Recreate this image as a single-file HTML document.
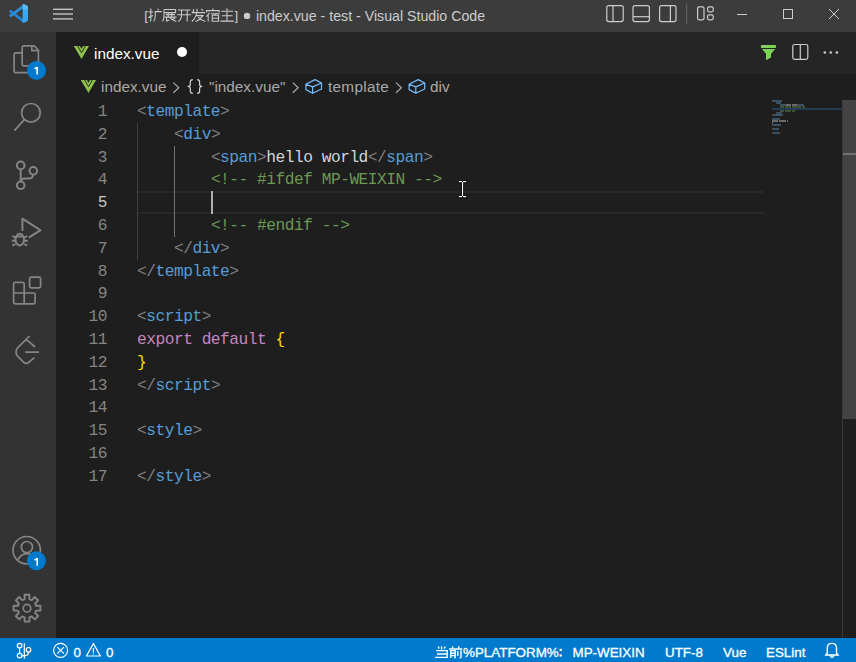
<!DOCTYPE html>
<html><head><meta charset="utf-8">
<style>
*{margin:0;padding:0;box-sizing:border-box}
html,body{width:856px;height:662px;overflow:hidden;background:#1e1e1e}
body{position:relative;font-family:"Liberation Sans",sans-serif}
.abs{position:absolute}
#title{left:0;top:0;width:856px;height:32px;background:#3c3c3c}
#act{left:0;top:32px;width:56px;height:606px;background:#333333}
#tabs{left:56px;top:32px;width:800px;height:42px;background:#252526}
#tab{left:56px;top:32px;width:143px;height:42px;background:#1e1e1e}
#status{left:0;top:638px;width:856px;height:24px;background:#007acc}
.t{position:absolute;white-space:pre;line-height:1}
.st{-webkit-text-stroke:0.3px #ffffff}
.code{position:absolute;left:137px;font-family:"Liberation Mono",monospace;font-size:16.2px;letter-spacing:-0.48px;white-space:pre;color:#d4d4d4;height:22.8px;line-height:22.8px}
.ln{position:absolute;left:60px;width:47px;text-align:right;font-family:"Liberation Mono",monospace;font-size:16.2px;letter-spacing:-0.48px;color:#858585;height:22.8px;line-height:22.8px}
.p{color:#808080}.g{color:#569cd6}.c{color:#6a9955}.k{color:#c586c0}.y{color:#ffd700}
svg{position:absolute;left:0;top:0;overflow:visible}
</style></head><body>
<div id="title" class="abs"></div>
<div id="act" class="abs"></div>
<div id="tabs" class="abs"></div>
<div id="tab" class="abs"></div>
<div id="status" class="abs"></div>

<!-- current line highlight -->
<div class="abs" style="left:138px;top:191px;width:626px;height:2px;background:#282828"></div>
<div class="abs" style="left:138px;top:212px;width:626px;height:2px;background:#282828"></div>
<!-- indent guides -->
<div class="abs" style="left:137px;top:123px;width:1px;height:137px;background:#404040"></div>
<div class="abs" style="left:174px;top:146px;width:1px;height:91px;background:#707070"></div>
<!-- cursor -->
<div class="abs" style="left:211px;top:191px;width:2px;height:23px;background:#aeafad"></div>

<!-- title text -->
<div class="t" style="left:144.2px;top:8.6px;font-size:13.4px;color:#cccccc">[</div>
<div class="t" style="left:234.6px;top:8.6px;font-size:13.4px;color:#cccccc">]</div>
<div class="t" style="left:255.9px;top:8.8px;font-size:14.2px;color:#cccccc">index.vue - test - Visual Studio Code</div>

<!-- tab text -->
<div class="t" style="left:94px;top:45.6px;font-size:15.3px;color:#ffffff">index.vue</div>
<div class="abs" style="left:176.5px;top:47.4px;width:10px;height:10px;border-radius:50%;background:#ffffff"></div>

<!-- breadcrumbs -->
<div class="t" style="left:101px;top:79.4px;font-size:15.3px;color:#a9a9a9">index.vue</div>
<div class="t" style="left:209px;top:79.4px;font-size:15.3px;color:#a9a9a9">"index.vue"</div>
<div class="t" style="left:328px;top:79.4px;font-size:15.3px;letter-spacing:0.3px;color:#a9a9a9">template</div>
<div class="t" style="left:430px;top:79.4px;font-size:15.3px;color:#a9a9a9">div</div>

<!-- code -->
<div class="ln" style="top:101px">1</div>
<div class="code" style="top:101px"><span class="p">&lt;</span><span class="g">template</span><span class="p">&gt;</span></div>
<div class="ln" style="top:124px">2</div>
<div class="code" style="top:124px">    <span class="p">&lt;</span><span class="g">div</span><span class="p">&gt;</span></div>
<div class="ln" style="top:147px">3</div>
<div class="code" style="top:147px">        <span class="p">&lt;</span><span class="g">span</span><span class="p">&gt;</span>hello world<span class="p">&lt;/</span><span class="g">span</span><span class="p">&gt;</span></div>
<div class="ln" style="top:169px">4</div>
<div class="code" style="top:169px">        <span class="c">&lt;!-- #ifdef MP-WEIXIN --&gt;</span></div>
<div class="ln" style="top:192px;color:#c6c6c6">5</div>
<div class="ln" style="top:215px">6</div>
<div class="code" style="top:215px">        <span class="c">&lt;!-- #endif --&gt;</span></div>
<div class="ln" style="top:238px">7</div>
<div class="code" style="top:238px">    <span class="p">&lt;/</span><span class="g">div</span><span class="p">&gt;</span></div>
<div class="ln" style="top:261px">8</div>
<div class="code" style="top:261px"><span class="p">&lt;/</span><span class="g">template</span><span class="p">&gt;</span></div>
<div class="ln" style="top:283px">9</div>
<div class="ln" style="top:306px">10</div>
<div class="code" style="top:306px"><span class="p">&lt;</span><span class="g">script</span><span class="p">&gt;</span></div>
<div class="ln" style="top:329px">11</div>
<div class="code" style="top:329px"><span class="k">export</span> <span class="k">default</span> <span class="y">{</span></div>
<div class="ln" style="top:352px">12</div>
<div class="code" style="top:352px"><span class="y">}</span></div>
<div class="ln" style="top:375px">13</div>
<div class="code" style="top:375px"><span class="p">&lt;/</span><span class="g">script</span><span class="p">&gt;</span></div>
<div class="ln" style="top:397px">14</div>
<div class="ln" style="top:420px">15</div>
<div class="code" style="top:420px"><span class="p">&lt;</span><span class="g">style</span><span class="p">&gt;</span></div>
<div class="ln" style="top:443px">16</div>
<div class="ln" style="top:466px">17</div>
<div class="code" style="top:466px"><span class="p">&lt;/</span><span class="g">style</span><span class="p">&gt;</span></div>

<!-- scrollbar -->
<div class="abs" style="left:842px;top:100px;width:1px;height:538px;background:#3a3a3a"></div>
<div class="abs" style="left:843px;top:100px;width:13px;height:319px;background:#434343"></div>
<div class="abs" style="left:843px;top:153px;width:13px;height:2px;background:#707070"></div>

<!-- status -->
<div class="t st" style="left:463px;top:645.6px;font-size:13.4px;color:#ffffff">%PLATFORM%</div>
<div class="t st" style="left:572.5px;top:645.6px;font-size:13.4px;color:#ffffff">MP-WEIXIN</div>
<div class="t st" style="left:665px;top:645.6px;font-size:13.4px;color:#ffffff">UTF-8</div>
<div class="t st" style="left:723px;top:645.6px;font-size:13.4px;color:#ffffff">Vue</div>
<div class="t st" style="left:766px;top:645.6px;font-size:13.4px;color:#ffffff">ESLint</div>
<div class="t st" style="left:73.5px;top:645.6px;font-size:13.4px;color:#ffffff">0</div>
<div class="t st" style="left:106px;top:645.6px;font-size:13.4px;color:#ffffff">0</div>

<svg width="856" height="662" viewBox="0 0 856 662">
 <!-- minimap -->
 <rect x="772" y="108" width="70" height="2" fill="#264f78" opacity="0.6"/>
 <g opacity="0.42"><rect x="772" y="100" width="1" height="2" fill="#808080"/><rect x="773" y="100" width="8" height="2" fill="#569cd6"/><rect x="781" y="100" width="1" height="2" fill="#808080"/><rect x="776" y="102" width="1" height="2" fill="#808080"/><rect x="777" y="102" width="3" height="2" fill="#569cd6"/><rect x="780" y="102" width="1" height="2" fill="#808080"/><rect x="780" y="104" width="1" height="2" fill="#808080"/><rect x="781" y="104" width="4" height="2" fill="#569cd6"/><rect x="785" y="104" width="1" height="2" fill="#808080"/><rect x="786" y="104" width="5" height="2" fill="#d4d4d4"/><rect x="792" y="104" width="5" height="2" fill="#d4d4d4"/><rect x="797" y="104" width="2" height="2" fill="#808080"/><rect x="799" y="104" width="4" height="2" fill="#569cd6"/><rect x="803" y="104" width="1" height="2" fill="#808080"/><rect x="780" y="106" width="4" height="2" fill="#6a9955"/><rect x="785" y="106" width="6" height="2" fill="#6a9955"/><rect x="792" y="106" width="9" height="2" fill="#6a9955"/><rect x="802" y="106" width="3" height="2" fill="#6a9955"/><rect x="780" y="110" width="4" height="2" fill="#6a9955"/><rect x="785" y="110" width="6" height="2" fill="#6a9955"/><rect x="792" y="110" width="3" height="2" fill="#6a9955"/><rect x="776" y="112" width="2" height="2" fill="#808080"/><rect x="778" y="112" width="3" height="2" fill="#569cd6"/><rect x="781" y="112" width="1" height="2" fill="#808080"/><rect x="772" y="114" width="2" height="2" fill="#808080"/><rect x="774" y="114" width="8" height="2" fill="#569cd6"/><rect x="782" y="114" width="1" height="2" fill="#808080"/><rect x="772" y="118" width="1" height="2" fill="#808080"/><rect x="773" y="118" width="6" height="2" fill="#569cd6"/><rect x="779" y="118" width="1" height="2" fill="#808080"/><rect x="772" y="120" width="6" height="2" fill="#d4d4d4"/><rect x="779" y="120" width="7" height="2" fill="#d4d4d4"/><rect x="787" y="120" width="1" height="2" fill="#d4d4d4"/><rect x="772" y="122" width="1" height="2" fill="#d4d4d4"/><rect x="772" y="124" width="2" height="2" fill="#808080"/><rect x="774" y="124" width="6" height="2" fill="#569cd6"/><rect x="780" y="124" width="1" height="2" fill="#808080"/><rect x="772" y="128" width="1" height="2" fill="#808080"/><rect x="773" y="128" width="5" height="2" fill="#569cd6"/><rect x="778" y="128" width="1" height="2" fill="#808080"/><rect x="772" y="132" width="2" height="2" fill="#808080"/><rect x="774" y="132" width="5" height="2" fill="#569cd6"/><rect x="779" y="132" width="1" height="2" fill="#808080"/></g>
 <!-- VS Code logo -->
 <g>
  <line x1="9.8" y1="10.6" x2="23.5" y2="21.2" stroke="#1f86dc" stroke-width="2.7"/>
  <line x1="23.5" y1="6.2" x2="9.8" y2="16.4" stroke="#2a8fd6" stroke-width="2.7"/>
  <polygon points="22.6,4.4 23.7,4 27.3,5.8 28,7 28,20 27.3,21.2 23.7,23 22.6,22.6" fill="#3aa6ee"/>
  <polygon points="22.6,4.4 23.7,4 27.3,5.8 28,7 28,9.5 22.6,9.5" fill="#5cb8f4"/>
 </g>
 <!-- hamburger -->
 <g stroke="#cccccc" stroke-width="1.3">
  <line x1="53" y1="9.3" x2="73" y2="9.3"/><line x1="53" y1="14" x2="73" y2="14"/><line x1="53" y1="18.9" x2="73" y2="18.9"/>
 </g>
 <!-- layout icons -->
 <g stroke="#cccccc" stroke-width="1.2" fill="none">
  <rect x="606.8" y="5.6" width="16.4" height="16" rx="2"/><line x1="613" y1="5.6" x2="613" y2="21.6"/>
  <rect x="633" y="5.6" width="16.4" height="16" rx="2"/><line x1="633" y1="16.7" x2="649.4" y2="16.7"/>
  <rect x="659.6" y="5.6" width="16.4" height="16" rx="2"/><line x1="670.4" y1="5.6" x2="670.4" y2="21.6"/>
  <rect x="697.6" y="6.8" width="6.4" height="13" rx="1.5"/>
  <rect x="707.6" y="6.8" width="5.6" height="5" rx="1.5"/>
  <rect x="707.6" y="14.8" width="5.6" height="5" rx="1.5"/>
 </g>
 <line x1="686.7" y1="4.3" x2="686.7" y2="24" stroke="#6a6a6a" stroke-width="1"/>
 <!-- window controls -->
 <g stroke="#cccccc" stroke-width="1" fill="none">
  <line x1="737" y1="14.5" x2="747" y2="14.5"/>
  <rect x="783.5" y="9.5" width="9" height="9"/>
  <line x1="829" y1="9" x2="839" y2="19"/><line x1="839" y1="9" x2="829" y2="19"/>
 </g>
 <!-- tab bar actions -->
 <rect x="760.9" y="44.9" width="15.1" height="3.1" rx="0.8" fill="#7dd454"/><polygon points="762,49.1 775.2,49.1 771,53.8 771,57.4 766,60.2 766,53.8" fill="#7dd454"/><rect x="762" y="45.4" width="4.6" height="1.3" fill="#b4b4b4" opacity="0.75"/>
 <g stroke="#cccccc" stroke-width="1.2" fill="none">
  <rect x="792.8" y="44.5" width="15" height="14.8" rx="1.8"/><line x1="800.3" y1="44.5" x2="800.3" y2="59.3"/>
 </g>
 <g fill="#cccccc"><circle cx="824.8" cy="52.5" r="1.3"/><circle cx="830.8" cy="52.5" r="1.3"/><circle cx="836.9" cy="52.5" r="1.3"/></g>
 <!-- vue icons -->
 <g id="vue">
  <polygon points="73.8,45.9 89,45.9 81.5,58.9" fill="#8dc149"/>
  <polyline points="77.4,45.6 81.5,52.7 85.6,45.6" fill="none" stroke="#1e1e1e" stroke-width="0.9"/>
  <polygon points="79.6,45.6 83.4,45.6 81.5,48.8" fill="#1e1e1e"/>
 </g>
 <use href="#vue" x="7" y="34"/>
 <!-- breadcrumb chevrons -->
 <g stroke="#a9a9a9" stroke-width="1.2" fill="none">
  <polyline points="173.4,82.6 178.8,87.7 173.4,92.8"/>
  <polyline points="292.8,82.6 298.2,87.7 292.8,92.8"/>
  <polyline points="396,82.6 401.4,87.7 396,92.8"/>
 </g>
 <!-- braces -->
 <g stroke="#d4d4d4" stroke-width="1.2" fill="none">
  <path d="M192.8,79.6 Q190.3,79.6 190.3,82 V84.5 Q190.3,86.5 187.6,86.5 Q190.3,86.5 190.3,88.5 V91 Q190.3,93.4 192.8,93.4"/>
  <path d="M197.1,79.6 Q199.6,79.6 199.6,82 V84.5 Q199.6,86.5 202.3,86.5 Q199.6,86.5 199.6,88.5 V91 Q199.6,93.4 197.1,93.4"/>
 </g>
 <!-- cubes -->
 <g id="cube" stroke="#75beff" stroke-width="1.2" fill="none" stroke-linejoin="round">
  <path d="M315,79.6 L321.5,83 V89 L312.6,93.2 L305.9,89.6 V84.2 Z M305.9,84.2 L312.6,86.9 L321.5,83 M312.6,86.9 V93.2"/>
 </g>
 <use href="#cube" x="103.2" y="0"/>
 <!-- mouse I-beam -->
 <g>
  <rect x="458" y="180.4" width="9" height="3" fill="#000" opacity="0.6"/>
  <rect x="458" y="195.4" width="9" height="3" fill="#000" opacity="0.6"/>
  <rect x="461" y="181" width="3" height="16" fill="#000" opacity="0.6"/>
  <rect x="458.8" y="181" width="3.2" height="1.2" fill="#fff"/><rect x="463" y="181" width="3.2" height="1.2" fill="#fff"/>
  <rect x="458.8" y="196" width="3.2" height="1.2" fill="#fff"/><rect x="463" y="196" width="3.2" height="1.2" fill="#fff"/>
  <rect x="462" y="182" width="1.1" height="14.2" fill="#fff"/>
 </g>
 <!-- activity bar icons -->
 <g stroke="#858585" stroke-width="1.7" fill="none" stroke-linejoin="round">
  <path d="M22.2,47.6 Q22.2,45.8 24,45.8 H34.2 L38.4,50 V64 Q38.4,65.8 36.6,65.8 H24 Q22.2,65.8 22.2,64 Z M31.8,45.8 V50.6 H38.4"/>
  <path d="M22.2,52.8 H15.9 Q14.1,52.8 14.1,54.6 V70.9 Q14.1,72.7 15.9,72.7 H28 Q29.8,72.7 29.8,70.9 V65.8"/>
  <circle cx="30.95" cy="112.8" r="9.3"/>
  <line x1="24.3" y1="119.6" x2="14.4" y2="130.6"/>
  <g stroke-width="2"><circle cx="20.7" cy="165.4" r="3.8"/><circle cx="33.3" cy="170.8" r="3.8"/><circle cx="20.7" cy="185.3" r="3.8"/>
  <path d="M20.7,169.2 V181.5 M20.8,181 Q21.8,178.4 24.5,178.4 H29.5 Q32.6,178.4 33.3,174.6"/></g>
  <g stroke-width="1.95"><path d="M22.4,231 V218.6 L40.6,230.2 L28.8,237.6"/>
  <ellipse cx="19.8" cy="239.6" rx="4.3" ry="5.8"/>
  <path d="M15.8,236.4 H23.8 M12.4,236 L15.4,237.6 M27.2,236 L24.2,237.6 M11.8,240.8 H15.6 M27.8,240.8 H24 M12.4,245.6 L15.4,244 M27.2,245.6 L24.2,244"/></g>
  <path d="M13.6,284 Q13.6,282.4 15.2,282.4 H22.6 Q24.2,282.4 24.2,284 V293 H33.5 Q35.1,293 35.1,294.6 V302.2 Q35.1,303.8 33.5,303.8 H15.2 Q13.6,303.8 13.6,302.2 Z M13.6,293 H24.2 V303.8"/>
  <rect x="29.6" y="277.1" width="11" height="10.7" rx="1.6"/>
  <path d="M29.5,336 L17.8,347.7 Q16,349.5 16,352 Q16,354.5 17.8,356.3 L23.8,362.3 Q26,364.3 28.5,362.5 L34.3,357.7 M24.3,341 Q26.7,339.7 29,341.6 L35,347 M25.2,352.2 H39"/>
  <circle cx="26.7" cy="550.2" r="13.7"/>
  <circle cx="26.9" cy="547.1" r="5.6"/>
  <path d="M18,559.6 Q21,553.8 26.8,553.6 Q32.6,553.8 35.6,559.6"/>
  <path d="M24.60,599.11 L24.60,594.80 L29.40,594.80 L29.40,599.11 L31.73,600.08 L34.78,597.03 L38.17,600.42 L35.12,603.47 L36.09,605.80 L40.40,605.80 L40.40,610.60 L36.09,610.60 L35.12,612.93 L38.17,615.98 L34.78,619.37 L31.73,616.32 L29.40,617.29 L29.40,621.60 L24.60,621.60 L24.60,617.29 L22.27,616.32 L19.22,619.37 L15.83,615.98 L18.88,612.93 L17.91,610.60 L13.60,610.60 L13.60,605.80 L17.91,605.80 L18.88,603.47 L15.83,600.42 L19.22,597.03 L22.27,600.08 Z" stroke-width="1.9"/>
  <circle cx="27" cy="608.2" r="3.8"/>
 </g>
 <!-- badges -->
 <circle cx="36.5" cy="70.4" r="9.5" fill="#007acc"/>
 <circle cx="36.4" cy="560.8" r="9.5" fill="#007acc"/>
 <g stroke="#fff" stroke-width="1.6" fill="none">
  <path d="M37.2,66.9 V74.6 M34.6,68.9 L37.2,67.2"/>
  <path d="M37.2,558.1 V565.7 M34.6,560.1 L37.2,558.4"/>
 </g>
 <!-- status icons -->
 <g stroke="#ffffff" stroke-width="1.2" fill="none">
  <circle cx="19.6" cy="645.6" r="2.3"/><circle cx="19.6" cy="655.6" r="2.3"/><circle cx="28.5" cy="649.8" r="2.3"/>
  <path d="M19.6,647.9 V653.3 M24.3,643.3 V658.7 M28.5,652.1 Q28.5,655.6 25.5,655.6 H21.8"/>
  <circle cx="60.6" cy="650.4" r="7"/>
  <path d="M57.3,647.1 L63.9,653.7 M63.9,647.1 L57.3,653.7"/>
  <path d="M93.4,643.6 L100.4,656 H86.4 Z" stroke-linejoin="round"/>
  <path d="M93.4,648 V652.6 M93.4,653.6 V654.6"/>
  <path stroke-width="1.4" d="M827.3,653 V648 Q827.3,643.4 831.9,643.4 Q836.5,643.4 836.5,648 V653 L838,655 H825.8 L827.3,653 Z M830.4,655.4 Q830.6,657.4 832,657.4 Q833.4,657.4 833.6,655.4"/>
 </g>

 <!-- CJK title -->
 <g stroke="#cccccc" stroke-width="1.05" fill="none">
  <path d="M148.5,12 H153.2 M150.8,8.6 V20.3 Q150.8,21.3 149.8,21 M148.3,17.6 L153.2,15.6 M157.8,8.6 L158.5,10.5 M154.6,11.6 H161.8 M155.3,11.6 V15.5 Q155.3,19.5 153.6,21.5"/>
  <path d="M164,9.5 H175.6 V12.6 H164 M164,9.5 V15 Q164,19 162.7,21.5 M165.8,14.6 H175 M164.8,17.1 H176.4 M168.2,12.6 V17.1 M171.8,12.6 V17.1 M166.6,17.1 V21 L169.5,20 M169.5,17.1 Q172,20.5 176.4,21.5 M175,18.3 L172.5,19.5"/>
  <path d="M178,10 H190.5 M177.3,14.8 H191 M181.5,10 V15 Q181.5,19.5 178.3,21.5 M187.2,10 V21.5"/>
  <path d="M193.6,9 Q193.8,11 192.8,12.2 M191.6,12.6 H205.2 M201.2,8.8 L203,10.6 M197,8.8 V11 Q196.5,17.5 191.8,21.5 M196,15.6 H203 Q200.5,19.5 195.5,21.5 M198.2,17.2 Q201,20.5 205.4,21.5"/>
  <path d="M213,8.6 V10 M206.6,12.6 V10.6 H219.2 V12.6 M209.6,12.8 L206.4,16.6 M208.2,15 V21.5 M211,13.8 H219.5 M215.5,13.8 L214.8,15.3 M212.2,15.3 H218.6 V21.3 H212.2 Z M212.2,18.2 H218.6"/>
  <path d="M226.2,8.6 L227.8,10 M221.2,11.3 H233 M221.8,15.8 H232.6 M227,11.3 V21.1 M220.4,21.1 H233.8"/>
 </g>
 <circle cx="247" cy="15.9" r="3.2" fill="#cccccc"/>
 <!-- CJK status -->
 <g stroke="#ffffff" stroke-width="1.4" fill="none">
  <path d="M438.2,646.6 L439.2,648.6 M441.6,646.2 V649.6 M445.2,646.6 L444.2,648.6 M436.2,650.6 H447.2 V657.4 M437,654 H447.2 M435.2,657.4 H448"/>
  <path d="M452.2,646.4 L453,648 M459.2,646.4 L458.4,648 M449,649 H462.4 M450.8,658 V650.6 H455.2 V657 Q455.2,658 454.2,657.8 M450.8,653.2 H455.2 M450.8,655.6 H455.2 M457.8,651 V656 M461,650.2 V657 Q461,658 459.6,657.8"/>
 </g>
 <rect x="559.6" y="648.8" width="2.2" height="2.2" fill="#fff"/><rect x="559.6" y="654.4" width="2.2" height="2.2" fill="#fff"/>
</svg>
<!-- badge digits -->


</body></html>
